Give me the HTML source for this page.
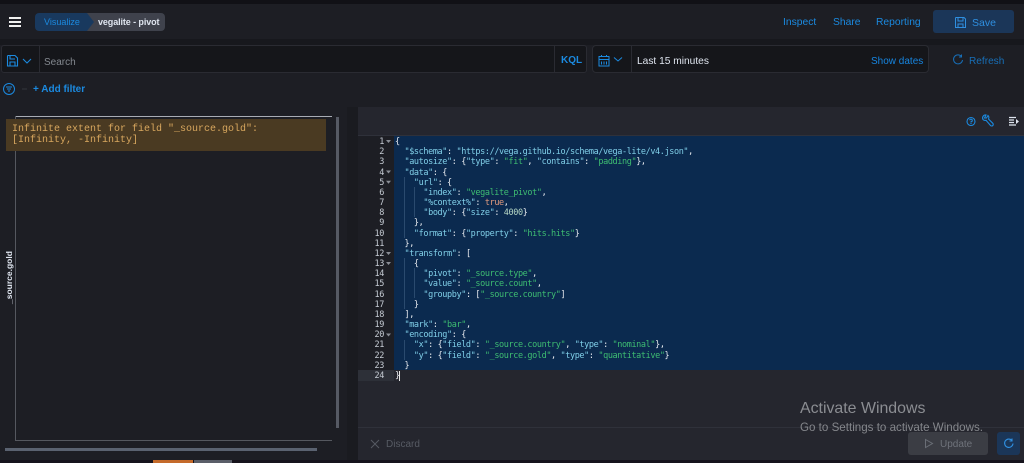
<!DOCTYPE html>
<html><head><meta charset="utf-8">
<style>
html,body{margin:0;padding:0;background:#1d1e24}
body{width:1024px;height:463px;overflow:hidden;position:relative;font-family:"Liberation Sans",sans-serif;color:#1b8ae0}
.a{position:absolute}
.t{position:absolute;white-space:nowrap;font-size:10.5px;line-height:14px}
.code{position:absolute;left:395px;top:137px;font:8.5px/10.17px "DejaVu Sans Mono",monospace;letter-spacing:-0.39px;white-space:pre;color:#9fd3e8}
.ln{position:absolute;left:358px;width:26px;top:137px;font:8.5px/10.17px "DejaVu Sans Mono",monospace;letter-spacing:-0.39px;text-align:right;color:#c6ccd4;white-space:pre}
.s{color:#3ebd72}.k{color:#80cfe8}.w{color:#e8ebf0}.n{color:#b5d6c4}.o{color:#e09a7e}
</style></head><body>
<div class="a" style="left:0;top:0;width:1024px;height:4px;background:#111116"></div>
<div class="a" style="left:0;top:39px;width:1024px;height:6px;background:#17181d"></div>
<!-- hamburger -->
<div class="a" style="left:9px;top:17px;width:12px;height:2px;background:#f0f0f0"></div>
<div class="a" style="left:9px;top:21px;width:12px;height:2px;background:#f0f0f0"></div>
<div class="a" style="left:9px;top:25px;width:12px;height:2px;background:#f0f0f0"></div>
<!-- breadcrumbs -->
<svg class="a" style="left:35px;top:13px" width="131" height="18"><path d="M4 0H126a4 4 0 0 1 4 4V14a4 4 0 0 1-4 4H4z" fill="#3f424c"/><path d="M4 0H52L59 9L52 18H4a4 4 0 0 1-4-4V4a4 4 0 0 1 4-4z" fill="#19395e"/></svg>
<div class="t" style="left:44px;top:15px;font-size:9px;color:#1b8ae0">Visualize</div>
<div class="t" style="left:98px;top:15px;font-size:9px;color:#dfe5ef;font-weight:bold;letter-spacing:-.1px">vegalite - pivot</div>
<!-- top right -->
<div class="t" style="left:783px;top:16px;font-size:10.3px">Inspect</div>
<div class="t" style="left:833px;top:16px;font-size:10.3px">Share</div>
<div class="t" style="left:876px;top:16px;font-size:10.3px">Reporting</div>
<div class="a" style="left:933px;top:10px;width:81px;height:23px;background:#1b3658;border-radius:3px"></div>
<svg class="a" style="left:954px;top:16px" width="13" height="13" fill="none" stroke="#2f8fe0" stroke-width="1"><path d="M2 1.5H10L11.5 3V11.5H1.5V2zM4 1.5V5H9V1.5M4 11.5V8H9V11.5"/></svg>
<div class="t" style="left:972px;top:16px;color:#2f8fe0;font-size:10.5px">Save</div>
<!-- search -->
<div class="a" style="left:1px;top:45px;width:586px;height:28px;background:#15161a;border:1px solid #2a2b32;border-radius:3px;box-sizing:border-box"></div>
<div class="a" style="left:39px;top:46px;width:1px;height:26px;background:#2a2b32"></div>
<div class="a" style="left:554px;top:46px;width:1px;height:26px;background:#2a2b32"></div>
<svg class="a" style="left:6px;top:54px" width="30" height="14" fill="none" stroke="#1b8ae0" stroke-width="1.1"><path d="M2 1.5H9L11.5 4V12H1.5V2zM4 1.5V5H9M4 12V8H9V12"/><path d="M17 5L21 9L25 5"/></svg>
<div class="t" style="left:44px;top:56px;font-size:10px;color:#83888f">Search</div>
<div class="t" style="left:561px;top:54px;font-size:10px;font-weight:bold;color:#1b8ae0">KQL</div>
<!-- date -->
<div class="a" style="left:592px;top:45px;width:337px;height:28px;background:#15161a;border:1px solid #2a2b32;border-radius:4px;box-sizing:border-box"></div>
<div class="a" style="left:631px;top:46px;width:1px;height:26px;background:#2a2b32"></div>
<svg class="a" style="left:598px;top:54px" width="28" height="13" fill="none" stroke="#1b8ae0" stroke-width="1"><path d="M1 2.5H11V12H1zM1 5.5H11M3.5 1V3M8.5 1V3M3.5 7.5V10.5M6 7.5V10.5M8.5 7.5V10.5"/><path d="M16 3.5L20 7L24 3.5"/></svg>
<div class="t" style="left:637px;top:54px;font-size:10.2px;line-height:14px;padding-top:1px;color:#dfe5ef">Last 15 minutes</div>
<div class="t" style="left:871px;top:55px;font-size:10px;color:#1685e0">Show dates</div>
<svg class="a" style="left:952px;top:54px" width="12" height="12" fill="none" stroke="#176fb8" stroke-width="1"><path d="M9.5 2.5A4.5 4.5 0 1 0 10.5 6M9.5 .5V3H7"/></svg>
<div class="t" style="left:969px;top:55px;font-size:10.1px;color:#176fb8">Refresh</div>
<!-- filter -->
<svg class="a" style="left:3px;top:83px" width="24" height="13" fill="none" stroke="#1b8ae0" stroke-width="1"><circle cx="6" cy="6" r="5.5"/><path d="M3 4H9M4 6H8M5 8H7"/><path d="M19 6H26" stroke="#33353c"/></svg>
<div class="t" style="left:33px;top:83px;font-size:10px;font-weight:bold;color:#1b8ae0">+ Add filter</div>
<!-- left panel -->
<div class="a" style="left:15px;top:116px;width:317px;height:1px;background:#a8acb4"></div>
<div class="a" style="left:15px;top:116px;width:1px;height:325px;background:#55585f"></div>
<div class="a" style="left:15px;top:440px;width:317px;height:1px;background:#55585f"></div>
<div class="a" style="left:6px;top:119px;width:320px;height:32px;background:#4a3a22"></div>
<div class="a" style="left:12px;top:125px;font:10px/10.5px 'Liberation Mono',monospace;color:#d8a75e;white-space:pre">Infinite extent for field "_source.gold":
[Infinity, -Infinity]</div>
<div class="a" style="left:4px;top:304px;font-size:8.5px;font-weight:bold;color:#dfe5ef;line-height:10px;white-space:nowrap;transform-origin:0 0;transform:rotate(-90deg)">_source.gold</div>
<div class="a" style="left:336px;top:117px;width:3px;height:311px;background:#565a64"></div>
<div class="a" style="left:5px;top:448px;width:312px;height:3px;background:#5a6270"></div>
<div class="a" style="left:351px;top:281px;width:1.5px;height:8px;background:#9a9ea6"></div>
<div class="a" style="left:354px;top:281px;width:1.5px;height:8px;background:#9a9ea6"></div>
<!-- editor -->
<div class="a" style="left:347px;top:107px;width:11px;height:353px;background:#1a1b20"></div>
<div class="a" style="left:358px;top:107px;width:666px;height:353px;background:#25262e"></div>
<div class="a" style="left:358px;top:135px;width:666px;height:1px;background:#2f313a"></div>
<div class="a" style="left:358px;top:136px;width:36px;height:240px;background:#1d1e24"></div>
<div class="a" style="left:358px;top:370px;width:36px;height:11px;background:#2d3038"></div>
<div class="a" style="left:394px;top:136px;width:630px;height:234px;background:#0b2a4f"></div>
<div class="a" style="left:358px;top:427px;width:666px;height:1px;background:#2f313a"></div>
<svg class="a" style="left:965px;top:113px" width="56" height="17" fill="none" stroke="#1b8ae0" stroke-width="1.1"><circle cx="6" cy="8.5" r="4"/><path d="M4.7 7.2a1.3 1.3 0 1 1 1.3 1.6V9.5M6 10V11"/><path d="M21 2a3 3 0 0 0-3 4.5a3 3 0 0 0 3 .8L25.5 12.5a1.5 1.5 0 0 0 2.3-2.2L23.5 6a3 3 0 0 0-.5-3.5L21.5 5H19.500z"/><path d="M44 4.5H51M44 7H49M44 9.5H49M44 12H51" stroke="#dfe5ef" stroke-width="1.3"/><path d="M51 6L54 8.5L51 11z" stroke="none" fill="#dfe5ef"/></svg>
<div class="ln">1
2
3
4
5
6
7
8
9
10
11
12
13
14
15
16
17
18
19
20
21
22
23
24</div>
<div class="code"><span class="w">{</span>
  <span class="k">"$schema"</span><span class="w">:</span> <span class="k">"https://vega.github.io/schema/vega-lite/v4.json"</span><span class="w">,</span>
  <span class="k">"autosize"</span><span class="w">: {</span><span class="k">"type"</span><span class="w">:</span> <span class="s">"fit"</span><span class="w">,</span> <span class="k">"contains"</span><span class="w">:</span> <span class="s">"padding"</span><span class="w">},</span>
  <span class="k">"data"</span><span class="w">: {</span>
    <span class="k">"url"</span><span class="w">: {</span>
      <span class="k">"index"</span><span class="w">:</span> <span class="s">"vegalite_pivot"</span><span class="w">,</span>
      <span class="k">"%context%"</span><span class="w">:</span> <span class="o">true</span><span class="w">,</span>
      <span class="k">"body"</span><span class="w">: {</span><span class="k">"size"</span><span class="w">:</span> <span class="n">4000</span><span class="w">}</span>
    <span class="w">},</span>
    <span class="k">"format"</span><span class="w">: {</span><span class="k">"property"</span><span class="w">:</span> <span class="s">"hits.hits"</span><span class="w">}</span>
  <span class="w">},</span>
  <span class="k">"transform"</span><span class="w">: [</span>
    <span class="w">{</span>
      <span class="k">"pivot"</span><span class="w">:</span> <span class="s">"_source.type"</span><span class="w">,</span>
      <span class="k">"value"</span><span class="w">:</span> <span class="s">"_source.count"</span><span class="w">,</span>
      <span class="k">"groupby"</span><span class="w">: [</span><span class="s">"_source.country"</span><span class="w">]</span>
    <span class="w">}</span>
  <span class="w">],</span>
  <span class="k">"mark"</span><span class="w">:</span> <span class="s">"bar"</span><span class="w">,</span>
  <span class="k">"encoding"</span><span class="w">: {</span>
    <span class="k">"x"</span><span class="w">: {</span><span class="k">"field"</span><span class="w">:</span> <span class="s">"_source.country"</span><span class="w">,</span> <span class="k">"type"</span><span class="w">:</span> <span class="s">"nominal"</span><span class="w">},</span>
    <span class="k">"y"</span><span class="w">: {</span><span class="k">"field"</span><span class="w">:</span> <span class="s">"_source.gold"</span><span class="w">,</span> <span class="k">"type"</span><span class="w">:</span> <span class="s">"quantitative"</span><span class="w">}</span>
  <span class="w">}</span>
<span class="w">}</span></div>
<div class="a" style="left:399px;top:371px;width:1px;height:10px;background:#e8e8e8"></div>
<!-- fold arrows -->
<svg class="a" style="left:385px;top:137px" width="8" height="240" fill="#8a8e96"><path d="M1 3H6L3.5 6zM1 33.500H6L3.5 36.500zM1 43.700H6L3.5 46.700zM1 115H6L3.5 118zM1 125H6L3.5 128zM1 196.500H6L3.5 199.500z"/></svg>
<!-- indent guides -->
<div class="a" style="left:404px;top:177px;width:1px;height:61px;background:#2a4a6e"></div>
<div class="a" style="left:414px;top:187px;width:1px;height:30px;background:#2a4a6e"></div>
<div class="a" style="left:404px;top:258px;width:1px;height:51px;background:#2a4a6e"></div>
<div class="a" style="left:414px;top:268px;width:1px;height:30px;background:#2a4a6e"></div>
<div class="a" style="left:404px;top:340px;width:1px;height:20px;background:#2a4a6e"></div>
<!-- footer -->
<svg class="a" style="left:370px;top:439px" width="10" height="10" stroke="#555962" stroke-width="1"><path d="M1 1L9 9M9 1L1 9"/></svg>
<div class="t" style="left:386px;top:438px;font-size:10px;color:#575b64">Discard</div>
<div class="a" style="left:908px;top:432px;width:80px;height:23px;background:#3b3d44;border-radius:3px"></div>
<svg class="a" style="left:924px;top:438px" width="10" height="11" fill="none" stroke="#6a6e76"><path d="M1.5 1.5L8.5 5.500L1.5 9.500z"/></svg>
<div class="t" style="left:940px;top:438px;font-size:10px;color:#6f737b">Update</div>
<div class="a" style="left:997px;top:432px;width:23px;height:23px;background:#1b3658;border-radius:3px"></div>
<svg class="a" style="left:1003px;top:438px" width="11" height="11" fill="none" stroke="#2f8fe0" stroke-width="1.1"><path d="M9 2.5A4.2 4.2 0 1 0 10 5.5M9 .5V3H6.5"/></svg>
<!-- watermark -->
<div class="t" style="left:800px;top:400px;font-size:15.9px;line-height:17px;color:#8b8d92">Activate Windows</div>
<div class="t" style="left:800px;top:421px;font-size:11.6px;color:#85878c">Go to Settings to activate Windows.</div>
<!-- bottom strip -->
<div class="a" style="left:0;top:460px;width:1024px;height:3px;background:#16131c"></div>
<div class="a" style="left:153px;top:460px;width:40px;height:3px;background:#c46a2a"></div>
<div class="a" style="left:194px;top:460px;width:38px;height:3px;background:#5a5e68"></div>
</body></html>
